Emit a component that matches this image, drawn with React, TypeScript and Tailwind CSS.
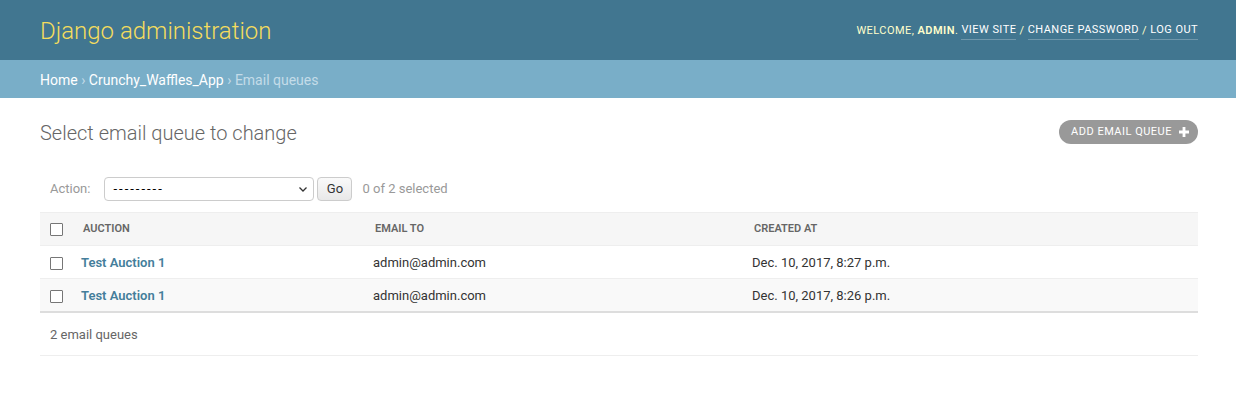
import React from "react";

const rows = [
  { auction: "Test Auction 1", email: "admin@admin.com", created: "Dec. 10, 2017, 8:27 p.m." },
  { auction: "Test Auction 1", email: "admin@admin.com", created: "Dec. 10, 2017, 8:26 p.m." },
];

function Checkbox() {
  return <span className="inline-block w-[13px] h-[13px] border border-[#767676] bg-white rounded-[1px] align-middle" />;
}

export default function App() {
  return (
    <div className="min-h-[413px] bg-white text-[#333] text-[13px]" style={{ fontFamily: 'Roboto, "Lucida Grande", Verdana, Arial, sans-serif' }}>
      <div className="h-[60px] bg-[#417690] pl-10 pr-[38px] pt-[2px] flex items-center justify-between">
        <h1 className="text-[24px] font-light text-[#f5dd5d] leading-none">Django administration</h1>
        <div className="text-[11px] uppercase tracking-[0.45px] text-[#ffc] flex items-center">
          <span>Welcome, <strong className="font-semibold">admin</strong>.&nbsp;</span>
          <span className="text-white border-b border-white/25">View site</span>
          <span>&nbsp;/&nbsp;</span>
          <span className="text-white border-b border-white/25">Change password</span>
          <span>&nbsp;/&nbsp;</span>
          <span className="text-white border-b border-white/25">Log out</span>
        </div>
      </div>
      <div className="h-[38px] bg-[#79aec8] px-10 pt-[2px] flex items-center text-[14px] text-[#c4dce8]">
        <span className="text-white">Home</span>
        <span>&nbsp;›&nbsp;</span>
        <span className="text-white">Crunchy_Waffles_App</span>
        <span>&nbsp;›&nbsp;</span>
        <span>Email queues</span>
      </div>
      <div className="pl-10 pr-[38px] pt-[21px]">
        <div className="flex items-start justify-between">
          <h1 className="text-[20px] font-light text-[#666] leading-[28px]">Select email queue to change</h1>
          <div className="h-[24px] mt-[1px] bg-[#999] rounded-[15px] pl-3 pr-[9px] flex items-center gap-[7px] text-white text-[11px] font-normal uppercase tracking-[0.5px]">
            <span>Add email queue</span>
            <svg width="10" height="10" viewBox="0 0 10 10"><path d="M3.6 0h2.8v3.6H10v2.8H6.4V10H3.6V6.4H0V3.6h3.6z" fill="#fff" /></svg>
          </div>
        </div>
        <div className="mt-[24px] h-[36px] px-[10px] flex items-center text-[13px] text-[#999]">
          <span>Action:</span>
          <div className="ml-[14px] w-[210px] h-[24px] border border-[#ccc] rounded-[4px] bg-white flex items-center justify-between pl-[8px] pr-[5px] text-black">
            <span className="text-[13px] tracking-[2px]">---------</span>
            <svg width="10" height="10" viewBox="0 0 10 10"><path d="M1.5 3.5L5 7l3.5-3.5" stroke="#333" strokeWidth="1.3" fill="none" /></svg>
          </div>
          <div className="ml-[3px] w-[35px] h-[24px] border border-[#ccc] rounded-[4px] bg-gradient-to-b from-[#fafafa] to-[#e8e8e8] flex items-center justify-center text-[#333] text-[13px]">Go</div>
          <span className="ml-[10px]">0 of 2 selected</span>
        </div>
        <div className="mt-[5px]">
          <div className="grid grid-cols-[31px_292px_379px_1fr] h-[34px] pt-[1px] bg-[#f6f6f6] border-t border-b border-[#eee] items-center text-[11px] font-semibold uppercase text-[#666]">
            <div className="pl-[10px] flex"><Checkbox /></div>
            <div className="pl-[12px]">Auction</div>
            <div className="pl-[12px]">Email to</div>
            <div className="pl-[12px]">Created at</div>
          </div>
          {rows.map((r, i) => (
            <div key={i} className={`grid grid-cols-[31px_292px_379px_1fr] h-[33px] pt-[2px] items-center border-b ${i === 1 ? "bg-[#f9f9f9] border-[#ddd]" : "bg-white border-[#eee]"} text-[13px] text-[#333]`}>
              <div className="pl-[10px] flex"><Checkbox /></div>
              <div className="pl-[10px] font-semibold text-[#447e9b]">{r.auction}</div>
              <div className="pl-[10px]">{r.email}</div>
              <div className="pl-[10px]">{r.created}</div>
            </div>
          ))}
          <div className="h-[44px] px-[10px] pt-[1px] flex items-center border-t border-[#ddd] border-b border-b-[#eee] text-[13px] text-[#666]">
            2 email queues
          </div>
        </div>
      </div>
    </div>
  );
}
